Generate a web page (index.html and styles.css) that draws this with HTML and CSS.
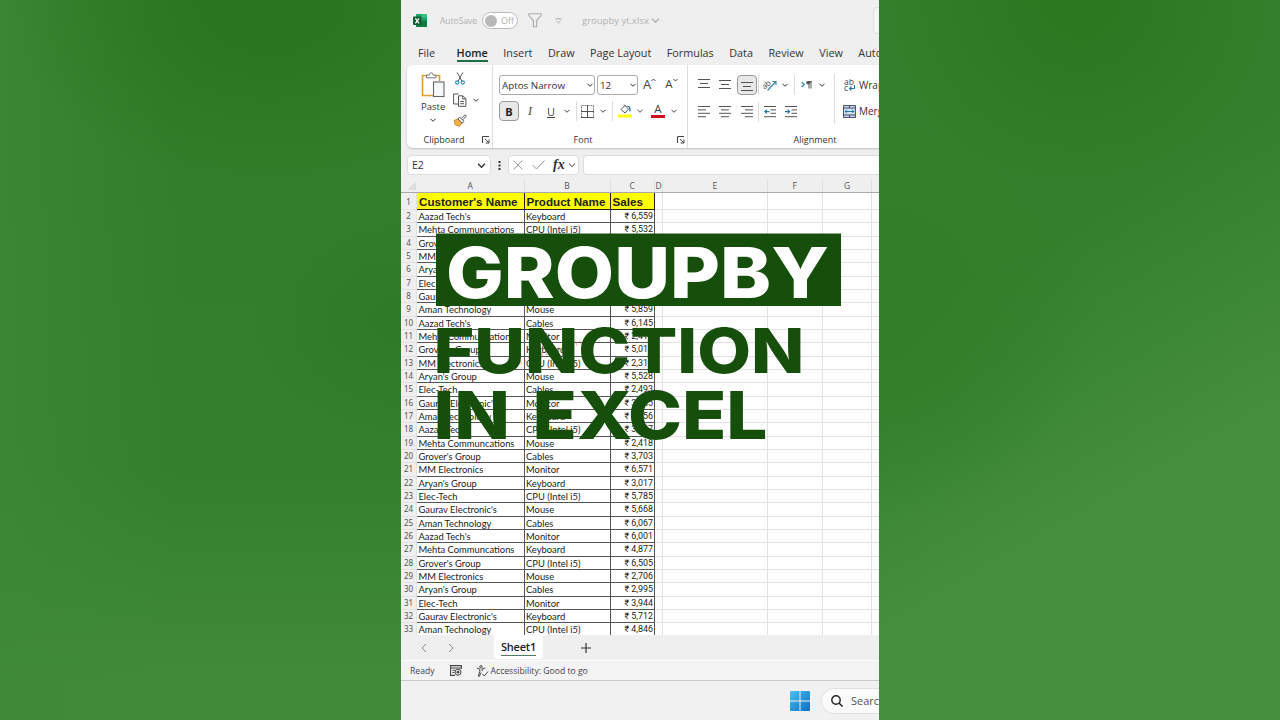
FILE: index.html
```
<!DOCTYPE html>
<html lang="en">
<head>
    <meta charset="UTF-8">
    <meta name="viewport" content="width=device-width, initial-scale=1.0">
    <title>GROUPBY function in Excel</title>
    <link rel="stylesheet" href="styles.css">
</head>
<body>
    <svg class="defs" width="0" height="0">
        <symbol id="chev" viewBox="0 0 8 8"><path d="M1.5 2.8 4 5.3 6.5 2.8" fill="none" stroke="currentColor" stroke-width="1"/></symbol>
        <symbol id="launch" viewBox="0 0 8 8"><path d="M.5 7V.5H7M3 3l4 4M7 3.6V7H3.6" fill="none" stroke="#444" stroke-width="1"/></symbol>
    </svg>

    <div class="side side-left"></div>

    <div class="window">
        <div class="titlebar">
            <svg class="logo" width="14" height="14" viewBox="0 0 14 14">
                <rect x="3" y="0" width="11" height="13" rx="1" fill="#21a366"/>
                <path d="M3 6.5h11V12a1 1 0 0 1-1 1H4a1 1 0 0 1-1-1z" fill="#107c41"/>
                <path d="M8.5 0H13a1 1 0 0 1 1 1v2.5H8.500z" fill="#33c481"/>
                <rect x="0" y="2.500" width="8.500" height="8.500" rx="1" fill="#0e5c2f"/>
                <path d="M2.400 4.300l3.700 5M6.100 4.300l-3.700 5" stroke="#fff" stroke-width="1.300"/>
            </svg>
            <span class="autosave">AutoSave</span>
            <span class="toggle"><i></i>Off</span>
            <svg class="funnel" width="14" height="15" viewBox="0 0 14 15"><path d="M.8.8h12.400v1.800L8.600 7.500v6.200H5.400V7.500L.8 2.600z" fill="none" stroke="#aaa" stroke-width="1.100"/></svg>
            <svg class="more" width="7" height="6" viewBox="0 0 7 6"><path d="M.5.800h6M1.300 2.800 3.500 4.800l2.200-2" fill="none" stroke="#aaa"/></svg>
            <span class="filename">groupby yt.xlsx</span>
            <svg class="chev-title" width="11" height="11"><use href="#chev"/></svg>
            <span class="search-box"></span>
        </div>

        <nav class="tabs">
            <span>File</span>
            <span class="active">Home</span>
            <span>Insert</span>
            <span>Draw</span>
            <span>Page Layout</span>
            <span>Formulas</span>
            <span>Data</span>
            <span>Review</span>
            <span>View</span>
            <span>Automate</span>
        </nav>

        <div class="ribbon">
            <div class="group clipboard">
                <div class="tools">
                    <div class="paste">
                        <svg width="24" height="26" viewBox="0 0 24 26">
                            <path d="M6.500 3.500H1.500v20h11M14 3.500h4.500V9" fill="none" stroke="#e0a03c" stroke-width="1.700"/>
                            <path d="M5.500 5.800V3.200h2.700C8.500 1.400 9.200.800 10.200.800s1.700.6 2 2.400h2.700v2.600z" fill="#fff" stroke="#777"/>
                            <rect x="12.500" y="10" width="10.500" height="14.500" fill="#f6f8fa" stroke="#666" stroke-width="1.100"/>
                        </svg>
                        <span>Paste</span>
                        <svg width="8" height="8"><use href="#chev"/></svg>
                    </div>
                    <div class="clip-icons">
                        <svg width="10" height="13" viewBox="0 0 10 13"><path d="M2.200.500 6.800 9M7.800.500 3.200 9" stroke="#555" fill="none"/><circle cx="2.200" cy="10.500" r="1.600" fill="none" stroke="#2b88c0" stroke-width="1.100"/><circle cx="7.800" cy="10.500" r="1.600" fill="none" stroke="#2b88c0" stroke-width="1.100"/></svg>
                        <div class="copy">
                            <svg width="14" height="14" viewBox="0 0 14 14"><path d="M5 11H.600V1H5.500" fill="none" stroke="#555"/><path d="M5.500 2.800h4.400l3 3v7.500H5.500zM9.700 3v3H13M7.300 8.500h3.700M7.300 10.700h3.700" fill="none" stroke="#555"/></svg>
                            <svg width="8" height="8"><use href="#chev"/></svg>
                        </div>
                        <svg width="14" height="13" viewBox="0 0 14 13"><path d="M1 6.500 5 5l4 4-2.500 3.300L2.500 11z" fill="#f2b04c" stroke="#d08a24"/><path d="M4.800 4.800l2-1.500 4.200 4-1.700 1.900zM8.500 4.300 12 .800l1.300 1.300L9.900 5.800" fill="#fff" stroke="#555"/></svg>
                    </div>
                </div>
                <div class="label">Clipboard<svg width="8" height="8"><use href="#launch"/></svg></div>
            </div>

            <div class="group font">
                <div class="font-row">
                    <div class="select font-name">Aptos Narrow<svg width="8" height="8"><use href="#chev"/></svg></div>
                    <div class="select font-size">12<svg width="8" height="8"><use href="#chev"/></svg></div>
                    <span class="grow">A<svg width="5" height="4" viewBox="0 0 5 4"><path d="M.5 3 2.500 1l2 2" fill="none" stroke="#444"/></svg></span>
                    <span class="grow shrink">A<svg width="5" height="4" viewBox="0 0 5 4"><path d="M.5 1l2 2 2-2" fill="none" stroke="#444"/></svg></span>
                </div>
                <div class="format-row">
                    <b class="pressed">B</b>
                    <i>I</i>
                    <u>U</u>
                    <svg width="8" height="8"><use href="#chev"/></svg>
                    <span class="sep"></span>
                    <svg width="13" height="13" viewBox="0 0 13 13"><path d="M.5.500h12v12H.500z" fill="none" stroke="#777" stroke-dasharray="2 1"/><path d="M6.500 0v13M0 6.500h13M0 12.500h13" stroke="#555"/></svg>
                    <svg width="8" height="8"><use href="#chev"/></svg>
                    <span class="sep"></span>
                    <svg width="14" height="14" viewBox="0 0 14 14"><rect y="10.500" width="14" height="3" fill="#ff0"/><path d="M3 5.500 7 1.500l3.500 3.700L7 9z M6 .500l2 2" fill="#fff" stroke="#555"/><path d="M9.500 2.500c2-.5 2.700 1.500 2.500 5" fill="none" stroke="#2576a8" stroke-width="1.300"/></svg>
                    <svg width="8" height="8"><use href="#chev"/></svg>
                    <span class="fcolor">A</span>
                    <svg width="8" height="8"><use href="#chev"/></svg>
                </div>
                <div class="label">Font<svg width="8" height="8"><use href="#launch"/></svg></div>
            </div>

            <div class="group align">
                <div class="tools">
                    <div class="align-grid">
                        <svg width="12" height="12" viewBox="0 0 12 12"><path d="M0 .500h12M2 4.500h8M0 8.500h12" stroke="#555"/></svg>
                        <svg width="12" height="12" viewBox="0 0 12 12"><path d="M0 1.500h12M2 5.500h8M0 9.500h12" stroke="#555"/></svg>
                        <span class="pressed"><svg width="12" height="12" viewBox="0 0 12 12"><path d="M0 3.500h12M2 7.500h8M0 11.500h12" stroke="#555"/></svg></span>
                        <span class="sep"></span>
                        <svg width="14" height="13" viewBox="0 0 14 13"><text x="-1" y="9" font-size="8" fill="#444" transform="rotate(-40 4 7)">ab</text><path d="M4.500 12.500 13 3.500M9.500 3.500H13V7" fill="none" stroke="#2b88a8" stroke-width="1.100"/></svg>
                        <svg width="8" height="8"><use href="#chev"/></svg>
                        <span class="sep"></span>
                        <svg width="12" height="9" viewBox="0 0 12 9"><path d="M.7 2 3.300 4.500.7 7" fill="none" stroke="#2b88a8" stroke-width="1.200"/><path d="M11 1H7a1.800 1.800 0 0 0 0 3.600h.800z" fill="#555"/><path d="M8 1v7.500M10 1v7.500" stroke="#555"/></svg>
                        <svg width="8" height="8"><use href="#chev"/></svg>

                        <svg width="12" height="12" viewBox="0 0 12 12"><path d="M0 .500h12M0 3.900h8M0 7.300h12M0 10.700h8" stroke="#555"/></svg>
                        <svg width="12" height="12" viewBox="0 0 12 12"><path d="M0 .500h12M2 3.900h8M0 7.300h12M2 10.700h8" stroke="#555"/></svg>
                        <svg width="12" height="12" viewBox="0 0 12 12"><path d="M0 .500h12M4 3.900h8M0 7.300h12M4 10.700h8" stroke="#555"/></svg>
                        <span class="sep"></span>
                        <svg width="12" height="12" viewBox="0 0 12 12"><path d="M0 .500h12M6.500 3.900H12M6.500 7.300H12M0 10.700h12" stroke="#555"/><path d="M5.500 5.600H.800M2.800 3.600l-2 2 2 2" fill="none" stroke="#2576a8" stroke-width="1.100"/></svg>
                        <svg class="indent" width="12" height="12" viewBox="0 0 12 12"><path d="M0 .500h12M6.500 3.900H12M6.500 7.300H12M0 10.700h12" stroke="#555"/><path d="M0 5.600h4.700M2.700 3.600l2 2-2 2" fill="none" stroke="#2576a8" stroke-width="1.100"/></svg>
                    </div>
                    <div class="wrap-col">
                        <div class="wrap-item">
                            <svg width="13" height="13" viewBox="0 0 13 13"><text x="1" y="6" font-size="8.500" fill="#444">ab</text><text x="1" y="12" font-size="8.500" fill="#444">c</text><path d="M11.500 6v3.500H6.500M8.500 7.500l-2 2 2 2" fill="none" stroke="#2576a8" stroke-width="1.100"/></svg>
                            <span>Wrap Text</span>
                        </div>
                        <div class="wrap-item">
                            <svg width="13" height="13" viewBox="0 0 13 13"><rect x=".6" y=".6" width="11.800" height="11.800" fill="#d4e9f5" stroke="#446"/><path d="M.6 3h11.800M.6 10h11.800M6.500.600V3M6.500 10v2.500" stroke="#446"/><path d="M2 6.500h9M4 4.700 2.200 6.500 4 8.300M9 4.700l1.800 1.800L9 8.300" fill="none" stroke="#1e79b0"/></svg>
                            <span>Merge &amp; Center</span>
                        </div>
                    </div>
                </div>
                <div class="label">Alignment</div>
            </div>
        </div>

        <div class="formula-bar">
            <div class="box name-box">E2<svg width="11" height="11"><use href="#chev"/></svg></div>
            <svg class="dots" width="3" height="11" viewBox="0 0 3 11"><path d="M.5 1h2v2h-2zM.5 4.500h2v2h-2zM.5 8h2v2h-2z" fill="#333"/></svg>
            <div class="box fx-box">
                <svg width="10" height="10" viewBox="0 0 10 10"><path d="M.5.500l9 9M9.500.500l-9 9" stroke="#999"/></svg>
                <svg width="13" height="10" viewBox="0 0 13 10"><path d="M.5 5l4 4 8-8.500" fill="none" stroke="#999"/></svg>
                <em>fx</em>
                <svg class="grey" width="10" height="10"><use href="#chev"/></svg>
            </div>
            <div class="box formula"></div>
        </div>

        <div class="sheet" id="sheet">
            <div class="cols">
                <span class="corner"></span><span>A</span><span>B</span><span>C</span><span>D</span><span>E</span><span>F</span><span>G</span><span></span>
            </div>
        </div>

        <div class="sheet-tabs">
            <svg width="6" height="10" viewBox="0 0 6 10"><path d="M5 1 1 5l4 4" fill="none" stroke="#888"/></svg>
            <svg width="6" height="10" viewBox="0 0 6 10"><path d="M1 1l4 4-4 4" fill="none" stroke="#888"/></svg>
            <div class="sheet-tab"><span>Sheet1</span></div>
            <svg class="add" width="10" height="10" viewBox="0 0 10 10"><path d="M5 0v10M0 5h10" stroke="#333" stroke-width="1.200"/></svg>
        </div>

        <div class="status">
            <span>Ready</span>
            <svg class="macro" width="12" height="11" viewBox="0 0 12 11"><path d="M5 10.400H.600V.600h10.800V4M.600 3h10.800M2.500 5.200H5M2.500 7.500h2" fill="none" stroke="#444" stroke-width="1.100"/><circle cx="8" cy="7.200" r="3" fill="none" stroke="#444"/><circle cx="8" cy="7.200" r="1.400" fill="#444"/></svg>
            <svg class="access" width="13" height="12" viewBox="0 0 13 12"><circle cx="5" cy="1.800" r="1.200" fill="none" stroke="#444"/><path d="M.8 3l3 1v2.500L2.300 11l1 .400L5 7.500M9.200 3l-3 1v2M6.500 9l1.800 2L12 6.500" fill="none" stroke="#444"/></svg>
            <span>Accessibility: Good to go</span>
        </div>

        <div class="taskbar">
            <svg class="start" width="20" height="20" viewBox="0 0 20 20">
                <defs><linearGradient id="win" x1="0" y1="0" x2="1" y2="1"><stop offset="0" stop-color="#4cc2f1"/><stop offset="1" stop-color="#0a6cc4"/></linearGradient></defs>
                <path d="M0 1a1 1 0 0 1 1-1h8.500v9.500H0zM10.500 0H19a1 1 0 0 1 1 1v8.500h-9.500zM0 10.500h9.500V20H1a1 1 0 0 1-1-1zM10.500 10.500H20V19a1 1 0 0 1-1 1h-8.500z" fill="url(#win)"/>
            </svg>
            <div class="search">
                <svg width="12" height="12" viewBox="0 0 12 12"><circle cx="5" cy="5" r="4.200" fill="none" stroke="#222" stroke-width="1.400"/><path d="M8 8l3.600 3.600" stroke="#222" stroke-width="1.500"/></svg>
                <span>Search</span>
            </div>
        </div>

        <!-- title laid over the sheet -->
        <svg class="headline" width="410" height="215" viewBox="0 0 410 215">
            <path class="mark" d="M84 129 152 107"/>
            <rect x="0" y=".5" width="405" height="72.500" fill="#164f0b"/>
            <text class="line1" x="10" y="64.500" textLength="383" lengthAdjust="spacingAndGlyphs">GROUPBY</text>
            <text class="line2" x="-2.500" y="139.500" textLength="371" lengthAdjust="spacingAndGlyphs">FUNCTION</text>
            <text class="line3" x="-2.500" y="205.500" textLength="334" lengthAdjust="spacingAndGlyphs">IN EXCEL</text>
        </svg>
    </div>

    <div class="side side-right"></div>

    <script src="script.js"></script>
</body>
</html>
```
FILE: styles.css
```
* {
    box-sizing: border-box;
}

body {
    margin: 0;
    display: flex;
    height: 720px;
    overflow: hidden;
    font-family: "Open Sans", "Noto Sans", sans-serif;
    font-size: 9px;
    color: #333;
}

svg {
    display: block;
    flex: none;
}

.defs {
    position: absolute;
}

.side-left {
    width: 401px;
    background:
        radial-gradient(ellipse 260px 190px at 270px 0, #2a7620 20%, rgba(42, 118, 32, 0)),
        radial-gradient(ellipse 150px 120px at 401px 320px, #2d7925, rgba(45, 121, 37, 0)),
        linear-gradient(to right, rgba(62, 137, 54, 0.7), rgba(62, 137, 54, 0) 45%),
        linear-gradient(to bottom, #317d29 0%, #337f2b 65%, #418b3a 95%);
}

.side-right {
    width: 401px;
    background:
        radial-gradient(ellipse 200px 190px at 200px 0, #2b7821 15%, rgba(43, 120, 33, 0)),
        radial-gradient(ellipse 220px 220px at 0 300px, #327e29 20%, rgba(50, 126, 41, 0)),
        linear-gradient(150deg, #337f2b 35%, #458f3e 68%);
}

.window {
    position: relative;
    width: 478px;
    height: 720px;
    overflow: hidden;
    display: flex;
    flex-direction: column;
    background: #efefef;
}

/* title bar */
.titlebar {
    height: 41px;
    display: flex;
    align-items: center;
    padding-left: 12px;
    color: #b0b0b0;
    white-space: nowrap;
}

.titlebar > * {
    flex: none;
}

.autosave {
    margin-left: 13px;
    width: 42px;
    font-size: 8.5px;
}

.toggle {
    display: flex;
    align-items: center;
    width: 36px;
    height: 17px;
    border: 1px solid #bbb;
    border-radius: 9px;
    background: #fff;
    padding-left: 2px;
    font-size: 9px;
}

.toggle i {
    width: 12px;
    height: 12px;
    margin-right: 4px;
    border-radius: 50%;
    background: #b8b8b8;
}

.funnel {
    margin-left: 10px;
}

.more {
    margin-left: 13px;
}

.filename {
    margin-left: 20px;
    width: 67px;
    font-size: 9.5px;
}

.chev-title {
    margin-left: 1px;
}

.search-box {
    margin-left: 212px;
    width: 40px;
    height: 27px;
    border: 1px solid #ddd;
    border-radius: 4px;
    background: #f5f5f5;
}

/* ribbon tabs */
.tabs {
    height: 24px;
    display: flex;
    align-items: center;
    gap: 15.5px;
    padding: 0 0 2px 17px;
    font-size: 10.8px;
    white-space: nowrap;
}

.tabs .active {
    margin-left: 6px;
    font-weight: 600;
    color: #222;
    box-shadow: 0 2px 0 #1d7045;
}

.ribbon {
    height: 83px;
    flex: none;
    margin-left: 6px;
    display: flex;
    background: #fff;
    border-radius: 6px 0 0 6px;
    box-shadow: 0 1px 2px rgba(0, 0, 0, 0.2);
    overflow: hidden;
}

.group {
    flex: none;
    display: flex;
    flex-direction: column;
    height: 83px;
}

.tools {
    display: flex;
    height: 67px;
}

.label {
    display: flex;
    align-items: center;
    justify-content: center;
    position: relative;
    height: 14px;
    font-size: 9px;
}

.label svg {
    position: absolute;
    right: 2px;
    top: 4px;
}

.clipboard {
    width: 86px;
    padding-right: 11px;
    border-right: 1px solid #ddd;
}

.clipboard .label svg {
    right: -9px;
}

.paste {
    width: 33px;
    margin-left: 11px;
    padding-top: 7px;
    display: flex;
    flex-direction: column;
    align-items: center;
    font-size: 9.5px;
    line-height: 18px;
}

.clip-icons {
    margin-left: 5px;
    padding-top: 7px;
    display: flex;
    flex-direction: column;
    gap: 7.5px;
    width: 30px;
}

.clip-icons > svg:first-child {
    margin-left: 2px;
}

.copy {
    display: flex;
    align-items: center;
    gap: 5px;
}

.font {
    width: 195px;
    padding-left: 6px;
    border-right: 1px solid #ddd;
}

.font-row {
    display: flex;
    align-items: center;
    height: 20px;
    margin-top: 10px;
}

.select {
    display: flex;
    align-items: center;
    justify-content: space-between;
    height: 20px;
    border: 1px solid #aaa;
    border-radius: 3px;
    font-size: 9.8px;
    padding-left: 2px;
    white-space: nowrap;
}

.font-name {
    width: 96px;
}

.font-size {
    width: 41px;
    margin-left: 2px;
}

.grow {
    display: flex;
    margin: -3px 0 0 5px;
    font-size: 13px;
    line-height: 16px;
    color: #444;
}

.grow svg {
    margin-top: 2px;
}

.shrink {
    margin-left: 9px;
    font-size: 11.5px;
}

.format-row {
    display: grid;
    grid-template-columns: 20px 22px 20px 12px 6px 17px 14px 5px 19px 12px 24px 7px;
    align-items: center;
    justify-items: center;
    height: 20px;
    margin: 6px 0 11px;
    font-size: 11px;
    color: #444;
}

.format-row i {
    font-family: "Liberation Serif", serif;
    font-size: 12px;
}

.pressed {
    width: 20px;
    height: 20px;
    display: flex;
    align-items: center;
    justify-content: center;
    border: 1px solid #999;
    border-radius: 4px;
    background: #e8e8e8;
    color: #222;
}

.sep {
    width: 1px;
    height: 20px;
    background: #ddd;
}

.fcolor {
    width: 14px;
    height: 14px;
    text-align: center;
    font-size: 11.5px;
    line-height: 10px;
    border-bottom: 3px solid #d00f1a;
}

.font .label {
    padding-right: 20px;
}

.align {
    width: 254px;
}

.align-grid {
    width: 147px;
    height: 50px;
    margin-top: 9px;
    padding-left: 6px;
    border-right: 1px solid #ddd;
    display: grid;
    grid-template-columns: 20px 22px 21px 3px 20px 9px 11px 13px 18px;
    grid-template-rows: 21px 21px;
    row-gap: 6px;
    align-items: center;
    justify-items: center;
}

.indent {
    margin-left: 12px;
}

.wrap-col {
    margin: 10px 0 0 8px;
    display: flex;
    flex-direction: column;
    gap: 6px;
    font-size: 10px;
    white-space: nowrap;
}

.wrap-item {
    display: flex;
    align-items: center;
    gap: 3px;
    height: 20px;
}

/* formula bar */
.formula-bar {
    display: flex;
    align-items: center;
    height: 20px;
    margin: 7px 0 0 6px;
    flex: none;
}

.box {
    height: 20px;
    display: flex;
    align-items: center;
    background: #fff;
    border: 1px solid #ddd;
    border-radius: 4px;
}

.name-box {
    width: 84px;
    padding: 0 3px 0 4px;
    justify-content: space-between;
    font-size: 10.5px;
}

.dots {
    margin: 0 7px;
}

.fx-box {
    width: 71px;
    padding-left: 4px;
    gap: 9px;
}

.fx-box em {
    font: italic bold 14px "Liberation Serif", serif;
    margin: 0 -7px 0 -1px;
}

.grey {
    color: #888;
}

.formula {
    flex: 1;
    margin-left: 4px;
    border-right: 0;
    border-radius: 4px 0 0 4px;
}

/* worksheet */
.sheet {
    height: 460px;
    flex: none;
    overflow: hidden;
}

.cols,
.row {
    display: grid;
    grid-template-columns: 16px 107.500px 86px 44.500px 8px 104.500px 55.500px 49px 8px;
    grid-template-rows: 100%;
}

.cols {
    height: 17.500px;
    padding-top: 4px;
    border-bottom: 1px solid #aaa;
    font-size: 8.500px;
    line-height: 13px;
    text-align: center;
    color: #555;
}

.cols span {
    border-right: 1px solid #e0e0e0;
}

.cols .corner {
    width: 8px;
    height: 8px;
    margin: 3px 0 0 7px;
    border: 0;
    background: linear-gradient(135deg, transparent 50%, #ddd 50%);
}

.row {
    height: 13.340px;
    background: #fff;
    font-family: Lato, sans-serif;
    font-size: 9.380px;
    line-height: 13px;
    white-space: nowrap;
    color: #222;
}

.row > span {
    border-right: 1px solid #e2e2e2;
    border-bottom: 1px solid #e2e2e2;
}

.row .num {
    background: #efefef;
    font-family: "Noto Sans", sans-serif;
    font-size: 8px;
    line-height: 12px;
    text-align: center;
    color: #555;
}

.row .data {
    padding-left: 1.500px;
    border-color: #555;
}

.row .sales {
    padding: 0 1px 0 0;
    text-align: right;
    font-family: Roboto, "Noto Sans", sans-serif;
    font-size: 8.900px;
    line-height: 12px;
}

.row.head {
    height: 17.500px;
}

.row.head .num {
    line-height: 18px;
}

.row.head .data {
    background: #ff0;
    border-color: #222;
    font: bold 11.650px/18px "Liberation Sans", sans-serif;
    padding-left: 2px;
    text-align: left;
}

/* sheet tabs and status bar */
.sheet-tabs {
    height: 26px;
    flex: none;
    display: flex;
    align-items: center;
    padding-left: 20px;
    border-bottom: 1px solid #fff;
}

.sheet-tabs svg + svg {
    margin-left: 21px;
}

.sheet-tab {
    align-self: flex-start;
    width: 49px;
    height: 24px;
    margin-left: 40px;
    padding-top: 3px;
    text-align: center;
    background: #fff;
    border-radius: 0 0 4px 4px;
    font-size: 11px;
    font-weight: 600;
    letter-spacing: -0.2px;
    color: #222;
}

.sheet-tab span {
    display: inline-block;
    line-height: 17px;
    border-bottom: 1.500px solid #4a7f66;
}

.add {
    margin-left: 38px;
}

.status {
    height: 20px;
    flex: none;
    display: flex;
    align-items: center;
    padding-left: 9px;
    background: #f3f3f3;
    border-bottom: 1px solid #c8c8c8;
    font-size: 8.650px;
    color: #444;
}

.macro {
    margin-left: 15px;
}

.access {
    margin: 0 2px 0 14px;
}

.taskbar {
    height: 39px;
    display: flex;
    align-items: center;
    padding-left: 389px;
    background: #f1f1f1;
}

.search {
    flex: none;
    display: flex;
    align-items: center;
    gap: 8px;
    width: 100px;
    height: 26px;
    margin-left: 11px;
    padding-left: 9px;
    border: 1px solid #e0e0e0;
    border-radius: 13px;
    background: #fbfbfb;
    font-size: 11px;
    color: #555;
}

/* headline */
.headline {
    position: absolute;
    left: 35px;
    top: 233px;
    overflow: visible;
    font-family: Inter, sans-serif;
    font-weight: 800;
    fill: #164f0b;
}

.headline .line1 {
    font-size: 70px;
    fill: #fff;
}

.headline .line2 {
    font-size: 62.500px;
}

.headline .line3 {
    font-size: 66px;
    word-spacing: 6px;
}

.headline .mark {
    stroke: rgba(214, 90, 90, 0.35);
    stroke-width: 5;
    stroke-dasharray: 1.500 3;
}
```
FILE: script.js
```
const names = ["Aazad Tech's", "Mehta Communcations", "Grover's Group", "MM Electronics",
    "Aryan's Group", "Elec-Tech", "Gaurav Electronic's", "Aman Technology"];
const products = ["Keyboard", "CPU (Intel i5)", "Mouse", "Cables", "Monitor"];
const sales = ["6,559", "5,532", "4,210", "3,118", "5,046", "2,871", "4,395", "5,859",
    "6,145", "2,417", "5,016", "2,319", "5,528", "2,493", "3,685", "5,956", "3,537", "2,418",
    "3,703", "6,571", "3,017", "5,785", "5,668", "6,067", "6,001", "4,877", "6,505", "2,706",
    "2,995", "3,944", "5,712", "4,846"];

const sheet = document.getElementById("sheet");

function addRow(num, cells, extra) {
    const row = document.createElement("div");
    row.className = "row " + extra;
    row.innerHTML = `<span class="num">${num}</span>
        <span class="data">${cells[0]}</span>
        <span class="data">${cells[1]}</span>
        <span class="data sales">${cells[2]}</span>` + "<span></span>".repeat(5);
    sheet.appendChild(row);
}

addRow(1, ["Customer's Name", "Product Name", "Sales"], "head");
sales.forEach((amount, i) => {
    addRow(i + 2, [names[i % names.length], products[i % products.length], "₹ " + amount], "");
});
```
